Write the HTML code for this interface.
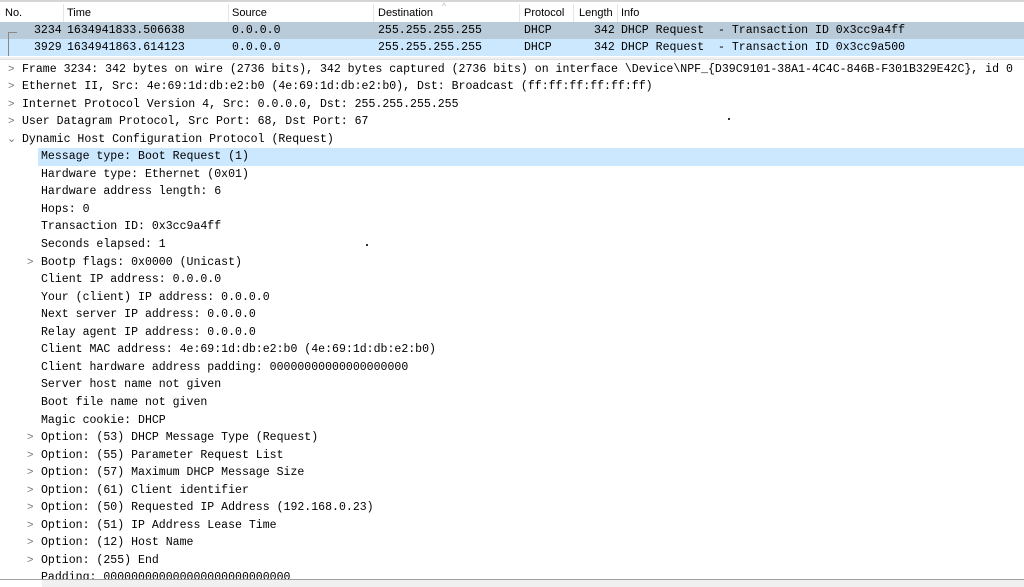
<!DOCTYPE html>
<html><head><meta charset="utf-8"><style>
*{margin:0;padding:0;box-sizing:border-box}
body{width:1024px;height:587px;overflow:hidden;background:#fff;position:relative;font-family:"Liberation Mono",monospace;font-size:11.55px;color:#000}
.hdr{position:absolute;top:0;left:0;width:1024px;height:22px;border-top:2px solid #d6d6d6;background:#fff;font-family:"Liberation Sans",sans-serif;font-size:11px}
.hdr span{position:absolute;top:5px}
.sep{position:absolute;top:2px;height:18px;width:1px;background:#e5e5e5}
.prow{position:absolute;left:0;width:1024px;height:17px;line-height:17px;white-space:pre}
.prow span{position:absolute;top:0}
.mid{position:absolute;top:57px;left:0;width:1024px;height:3px;background:#f0f0f0;border-bottom:1px solid #e0e0e0}
.d{position:absolute;left:0;width:1024px;height:17.55px;line-height:17.55px;white-space:pre}
.d .a{position:absolute;top:0;color:#777;font-family:"Liberation Sans",sans-serif;font-size:11px}
.d .t{position:absolute;top:0}
.sel{background:#cce8ff}
.bot{position:absolute;top:579px;left:0;width:1024px;height:8px;background:#f0f0f0;border-top:1px solid #a0a0a0}
</style></head><body>
<div class="hdr">
<span style="left:5px">No.</span><span style="left:67px">Time</span><span style="left:232px">Source</span><span style="left:378px">Destination</span><span style="left:524px">Protocol</span><span style="left:579px">Length</span><span style="left:621px">Info</span>
<div class="sep" style="left:63px"></div><div class="sep" style="left:228px"></div><div class="sep" style="left:373px"></div><div class="sep" style="left:519px"></div><div class="sep" style="left:573px"></div><div class="sep" style="left:617px"></div>
<span style="left:442px;top:-1px;color:#bbb;font-size:9px">^</span>
</div>
<div class="prow" style="top:22px;background:#b9cad8">
<div style="position:absolute;left:8px;top:10px;width:9px;height:1px;background:#888"></div><div style="position:absolute;left:8px;top:10px;width:1px;height:24px;background:#888"></div>
<span style="left:34px">3234</span><span style="left:67px">1634941833.506638</span><span style="left:232px">0.0.0.0</span><span style="left:378px">255.255.255.255</span><span style="left:524px">DHCP</span><span style="left:594px">342</span><span style="left:621px">DHCP Request  - Transaction ID 0x3cc9a4ff</span></div>
<div class="prow" style="top:39px;background:#cce8ff">
<div style="position:absolute;left:8px;top:0;width:1px;height:17px;background:#888"></div>
<span style="left:34px">3929</span><span style="left:67px">1634941863.614123</span><span style="left:232px">0.0.0.0</span><span style="left:378px">255.255.255.255</span><span style="left:524px">DHCP</span><span style="left:594px">342</span><span style="left:621px">DHCP Request  - Transaction ID 0x3cc9a500</span></div>
<div class="mid"></div>
<div class="d" style="top:60.5px"><span class="a" style="left:8px">&gt;</span><span class="t" style="left:22px">Frame 3234: 342 bytes on wire (2736 bits), 342 bytes captured (2736 bits) on interface \Device\NPF_{D39C9101-38A1-4C4C-846B-F301B329E42C}, id 0</span></div>
<div class="d" style="top:78px"><span class="a" style="left:8px">&gt;</span><span class="t" style="left:22px">Ethernet II, Src: 4e:69:1d:db:e2:b0 (4e:69:1d:db:e2:b0), Dst: Broadcast (ff:ff:ff:ff:ff:ff)</span></div>
<div class="d" style="top:95.6px"><span class="a" style="left:8px">&gt;</span><span class="t" style="left:22px">Internet Protocol Version 4, Src: 0.0.0.0, Dst: 255.255.255.255</span></div>
<div class="d" style="top:113.1px"><span class="a" style="left:8px">&gt;</span><span class="t" style="left:22px">User Datagram Protocol, Src Port: 68, Dst Port: 67</span></div>
<div class="d" style="top:130.7px"><span class="a" style="left:7px">&#8964;</span><span class="t" style="left:22px">Dynamic Host Configuration Protocol (Request)</span></div>
<div class="d sel" style="top:148.2px;left:38px;width:986px"><span class="t" style="left:3px">Message type: Boot Request (1)</span></div>
<div class="d" style="top:165.8px"><span class="t" style="left:41px">Hardware type: Ethernet (0x01)</span></div>
<div class="d" style="top:183.3px"><span class="t" style="left:41px">Hardware address length: 6</span></div>
<div class="d" style="top:200.9px"><span class="t" style="left:41px">Hops: 0</span></div>
<div class="d" style="top:218.4px"><span class="t" style="left:41px">Transaction ID: 0x3cc9a4ff</span></div>
<div class="d" style="top:236px"><span class="t" style="left:41px">Seconds elapsed: 1</span></div>
<div class="d" style="top:253.5px"><span class="a" style="left:27px">&gt;</span><span class="t" style="left:41px">Bootp flags: 0x0000 (Unicast)</span></div>
<div class="d" style="top:271.1px"><span class="t" style="left:41px">Client IP address: 0.0.0.0</span></div>
<div class="d" style="top:288.6px"><span class="t" style="left:41px">Your (client) IP address: 0.0.0.0</span></div>
<div class="d" style="top:306.2px"><span class="t" style="left:41px">Next server IP address: 0.0.0.0</span></div>
<div class="d" style="top:323.7px"><span class="t" style="left:41px">Relay agent IP address: 0.0.0.0</span></div>
<div class="d" style="top:341.3px"><span class="t" style="left:41px">Client MAC address: 4e:69:1d:db:e2:b0 (4e:69:1d:db:e2:b0)</span></div>
<div class="d" style="top:358.8px"><span class="t" style="left:41px">Client hardware address padding: 00000000000000000000</span></div>
<div class="d" style="top:376.4px"><span class="t" style="left:41px">Server host name not given</span></div>
<div class="d" style="top:393.9px"><span class="t" style="left:41px">Boot file name not given</span></div>
<div class="d" style="top:411.5px"><span class="t" style="left:41px">Magic cookie: DHCP</span></div>
<div class="d" style="top:429px"><span class="a" style="left:27px">&gt;</span><span class="t" style="left:41px">Option: (53) DHCP Message Type (Request)</span></div>
<div class="d" style="top:446.6px"><span class="a" style="left:27px">&gt;</span><span class="t" style="left:41px">Option: (55) Parameter Request List</span></div>
<div class="d" style="top:464.1px"><span class="a" style="left:27px">&gt;</span><span class="t" style="left:41px">Option: (57) Maximum DHCP Message Size</span></div>
<div class="d" style="top:481.7px"><span class="a" style="left:27px">&gt;</span><span class="t" style="left:41px">Option: (61) Client identifier</span></div>
<div class="d" style="top:499.2px"><span class="a" style="left:27px">&gt;</span><span class="t" style="left:41px">Option: (50) Requested IP Address (192.168.0.23)</span></div>
<div class="d" style="top:516.8px"><span class="a" style="left:27px">&gt;</span><span class="t" style="left:41px">Option: (51) IP Address Lease Time</span></div>
<div class="d" style="top:534.3px"><span class="a" style="left:27px">&gt;</span><span class="t" style="left:41px">Option: (12) Host Name</span></div>
<div class="d" style="top:551.9px"><span class="a" style="left:27px">&gt;</span><span class="t" style="left:41px">Option: (255) End</span></div>
<div class="d" style="top:569.4px"><span class="t" style="left:41px">Padding: 000000000000000000000000000</span></div>
<div style="position:absolute;left:728px;top:118px;width:2px;height:2px;background:#333"></div>
<div style="position:absolute;left:366px;top:244px;width:2px;height:2px;background:#333"></div>
<div class="bot"><div style="position:absolute;left:0;top:0;width:42px;height:7px;background:#fff"></div></div>
</body></html>
